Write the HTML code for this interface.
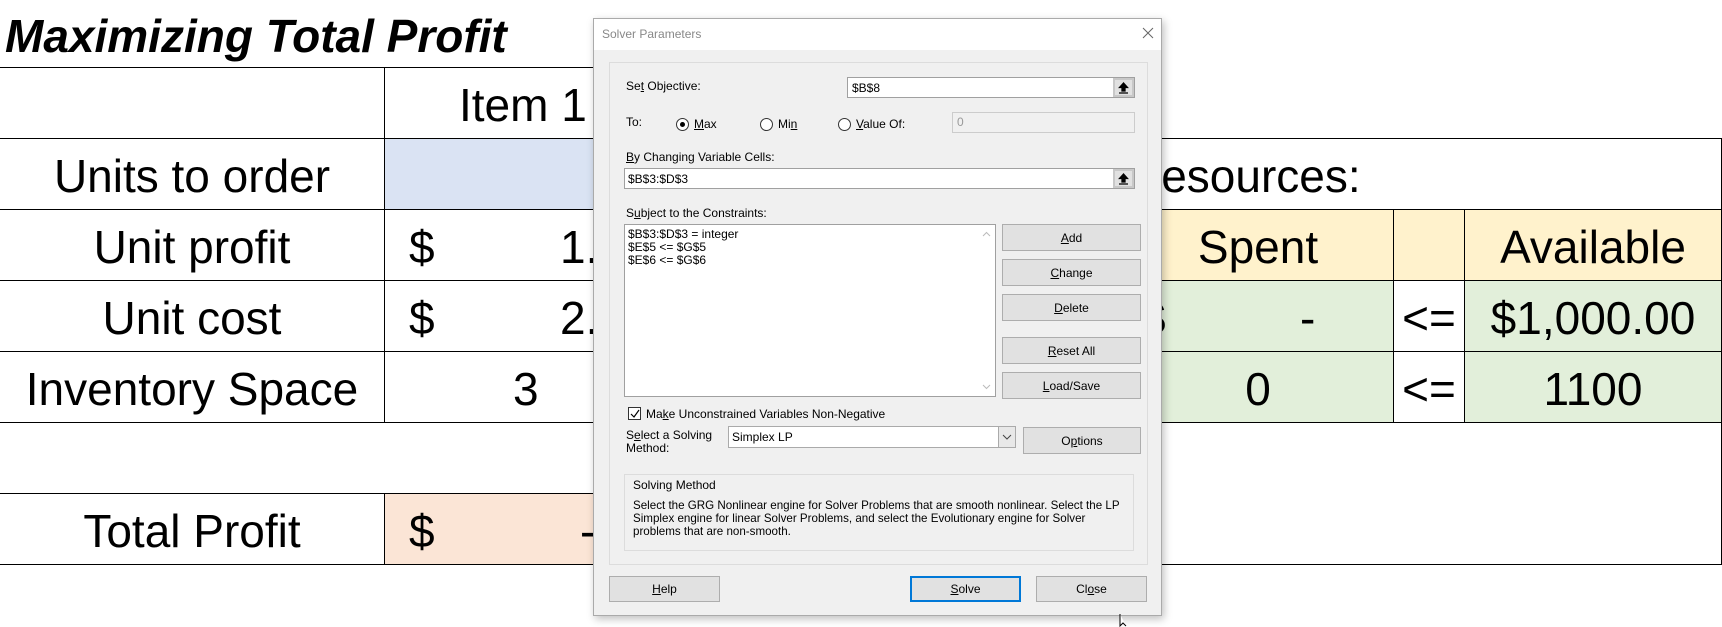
<!DOCTYPE html>
<html><head><meta charset="utf-8"><style>
*{margin:0;padding:0;box-sizing:border-box}
body{width:1722px;height:626px;background:#fff;position:relative;overflow:hidden;font-family:"Liberation Sans",sans-serif;color:#000}
.a{position:absolute}
.hl{position:absolute;height:1px;background:#000}
.vl{position:absolute;width:1px;background:#000}
.c{position:absolute;display:flex;align-items:center;justify-content:center;font-size:46px;white-space:nowrap;padding-top:4px}
.d{font-size:12px;font-family:"Liberation Sans",sans-serif;color:#000;position:absolute;white-space:nowrap}
.btn{position:absolute;background:#e1e1e1;border:1px solid #adadad;font-size:12px;display:flex;align-items:center;justify-content:center}
.inp{position:absolute;background:#fff;border:1px solid #a0a0a0}
.ref{position:absolute;right:0;top:0;bottom:0;width:21px;background:#e1e1e1;border:2px solid #c8c8c8;display:flex;align-items:center;justify-content:center}
.rad{position:absolute;width:13px;height:13px;border:1px solid #333;border-radius:50%;background:#fff}
u{text-decoration:underline}
</style></head><body>
<div class="a" style="left:5px;top:8px;font-size:46px;font-weight:bold;font-style:italic;line-height:56px">Maximizing Total Profit</div>

<div class="a" style="left:385px;top:139px;width:220px;height:70px;background:#dae3f3"></div>
<div class="a" style="left:385px;top:494px;width:220px;height:70px;background:#fbe5d6"></div>
<div class="a" style="left:1100px;top:210px;width:622px;height:70px;background:#fff2cc"></div>
<div class="a" style="left:1100px;top:281px;width:293px;height:141px;background:#e2efda"></div>
<div class="a" style="left:1465px;top:281px;width:257px;height:141px;background:#e2efda"></div>

<div class="hl" style="left:0;top:67px;width:620px"></div>
<div class="hl" style="left:0;top:138px;width:1722px"></div>
<div class="hl" style="left:0;top:209px;width:1722px"></div>
<div class="hl" style="left:0;top:280px;width:1722px"></div>
<div class="hl" style="left:0;top:351px;width:1722px"></div>
<div class="hl" style="left:0;top:422px;width:1722px"></div>
<div class="hl" style="left:0;top:493px;width:620px"></div>
<div class="hl" style="left:0;top:564px;width:1722px"></div>
<div class="vl" style="left:384px;top:67px;height:356px"></div>
<div class="vl" style="left:384px;top:493px;height:72px"></div>
<div class="vl" style="left:1393px;top:209px;height:214px"></div>
<div class="vl" style="left:1464px;top:209px;height:214px"></div>
<div class="vl" style="left:1721px;top:138px;height:427px"></div>

<div class="c" style="left:0;top:139px;width:384px;height:70px">Units to order</div>
<div class="c" style="left:0;top:210px;width:384px;height:70px">Unit profit</div>
<div class="c" style="left:0;top:281px;width:384px;height:70px">Unit cost</div>
<div class="c" style="left:0;top:352px;width:384px;height:70px">Inventory Space</div>
<div class="c" style="left:0;top:494px;width:384px;height:70px">Total Profit</div>
<div class="c" style="left:459px;top:68px;height:70px">Item 1</div>
<div class="c" style="left:409px;top:210px;height:70px">$</div>
<div class="c" style="left:409px;top:281px;height:70px">$</div>
<div class="c" style="left:409px;top:494px;height:70px">$</div>
<div class="c" style="left:560px;top:210px;height:70px">1.</div>
<div class="c" style="left:560px;top:281px;height:70px">2.</div>
<div class="c" style="left:513px;top:352px;height:70px">3</div>
<div class="c" style="left:580px;top:494px;height:70px">-</div>

<div class="c" style="left:1128px;top:139px;height:70px">Resources:</div>
<div class="c" style="left:1160px;top:210px;width:196px;height:70px">Spent</div>
<div class="c" style="left:1140px;top:281px;height:70px">$</div>
<div class="c" style="left:1300px;top:281px;height:70px">-</div>
<div class="c" style="left:1160px;top:352px;width:196px;height:70px">0</div>
<div class="c" style="left:1394px;top:281px;width:70px;height:70px">&lt;=</div>
<div class="c" style="left:1394px;top:352px;width:70px;height:70px">&lt;=</div>
<div class="c" style="left:1465px;top:210px;width:256px;height:70px">Available</div>
<div class="c" style="left:1465px;top:281px;width:256px;height:70px">$1,000.00</div>
<div class="c" style="left:1465px;top:352px;width:256px;height:70px">1100</div>

<div class="a" style="left:593px;top:18px;width:569px;height:598px;background:#f0f0f0;border:1px solid #aaa;box-shadow:2px 3px 8px rgba(0,0,0,0.25);z-index:5">
 <div class="a" style="left:0;top:0;width:567px;height:31px;background:#fff"></div>
 <div class="d" style="left:8px;top:8px;color:#888">Solver Parameters</div>
 <svg class="a" style="left:548px;top:8px" width="12" height="12"><path d="M1 1L11 11M11 1L1 11" stroke="#666" stroke-width="1"/></svg>
 <div class="a" style="left:15px;top:43px;width:539px;height:503px;border:1px solid #dcdcdc"></div>

 <div class="d" style="left:32px;top:60px">Se<u>t</u> Objective:</div>
 <div class="inp" style="left:253px;top:58px;width:288px;height:21px"><span class="d" style="left:4px;top:3px">$B$8</span><div class="ref"><svg width="11" height="12"><path d="M5.5 1L1.5 5.5H4V9H7V5.5H9.5Z M1 11H10" fill="#000" stroke="#000" stroke-width="1.3"/></svg></div></div>

 <div class="d" style="left:32px;top:96px">To:</div>
 <div class="rad" style="left:82px;top:99px"><div class="a" style="left:3px;top:3px;width:5px;height:5px;border-radius:50%;background:#000"></div></div>
 <div class="d" style="left:100px;top:98px"><u>M</u>ax</div>
 <div class="rad" style="left:166px;top:99px"></div>
 <div class="d" style="left:184px;top:98px">Mi<u>n</u></div>
 <div class="rad" style="left:244px;top:99px"></div>
 <div class="d" style="left:262px;top:98px"><u>V</u>alue Of:</div>
 <div class="inp" style="left:358px;top:93px;width:183px;height:21px;background:#f0f0f0;border-color:#ccc"><span class="d" style="left:4px;top:2px;color:#999">0</span></div>

 <div class="d" style="left:32px;top:131px"><u>B</u>y Changing Variable Cells:</div>
 <div class="inp" style="left:30px;top:149px;width:511px;height:21px"><span class="d" style="left:3px;top:3px">$B$3:$D$3</span><div class="ref"><svg width="11" height="12"><path d="M5.5 1L1.5 5.5H4V9H7V5.5H9.5Z M1 11H10" fill="#000" stroke="#000" stroke-width="1.3"/></svg></div></div>

 <div class="d" style="left:32px;top:187px">S<u>u</u>bject to the Constraints:</div>
 <div class="inp" style="left:30px;top:205px;width:372px;height:173px">
  <div class="d" style="left:3px;top:3px;line-height:13px">$B$3:$D$3 = integer<br>$E$5 &lt;= $G$5<br>$E$6 &lt;= $G$6</div>
  <svg class="a" style="right:4px;top:6px" width="9" height="6"><path d="M1 5L4.5 1.5L8 5" fill="none" stroke="#bbb"/></svg>
  <svg class="a" style="right:4px;bottom:6px" width="9" height="6"><path d="M1 1L4.5 4.5L8 1" fill="none" stroke="#bbb"/></svg>
 </div>
 <div class="btn" style="left:408px;top:205px;width:139px;height:27px"><span><u>A</u>dd</span></div>
 <div class="btn" style="left:408px;top:240px;width:139px;height:27px"><span><u>C</u>hange</span></div>
 <div class="btn" style="left:408px;top:275px;width:139px;height:27px"><span><u>D</u>elete</span></div>
 <div class="btn" style="left:408px;top:318px;width:139px;height:27px"><span><u>R</u>eset All</span></div>
 <div class="btn" style="left:408px;top:353px;width:139px;height:27px"><span><u>L</u>oad/Save</span></div>

 <div class="a" style="left:34px;top:388px;width:13px;height:13px;border:1px solid #333;background:#fff"><svg class="a" style="left:1px;top:1px" width="10" height="10"><path d="M1 5L4 8L9 1" fill="none" stroke="#000" stroke-width="1.2"/></svg></div>
 <div class="d" style="left:52px;top:388px">Ma<u>k</u>e Unconstrained Variables Non-Negative</div>

 <div class="d" style="left:32px;top:410px;line-height:13px">S<u>e</u>lect a Solving<br>Method:</div>
 <div class="inp" style="left:134px;top:407px;width:288px;height:22px;border-color:#aaa"><span class="d" style="left:3px;top:3px">Simplex LP</span>
  <div class="a" style="right:0;top:0;bottom:0;width:17px;background:#e8e8e8;border-left:1px solid #aaa"><svg class="a" style="left:3px;top:7px" width="10" height="6"><path d="M1 1L5 5L9 1" fill="none" stroke="#444"/></svg></div></div>
 <div class="btn" style="left:429px;top:408px;width:118px;height:27px"><span>O<u>p</u>tions</span></div>

 <div class="a" style="left:30px;top:455px;width:510px;height:77px;border:1px solid #dcdcdc"></div>
 <div class="d" style="left:39px;top:459px">Solving Method</div>
 <div class="d" style="left:39px;top:480px;line-height:13px;font-size:11.6px">Select the GRG Nonlinear engine for Solver Problems that are smooth nonlinear. Select the LP<br>Simplex engine for linear Solver Problems, and select the Evolutionary engine for Solver<br>problems that are non-smooth.</div>

 <div class="btn" style="left:15px;top:557px;width:111px;height:26px"><span><u>H</u>elp</span></div>
 <div class="btn" style="left:316px;top:557px;width:111px;height:26px;border:2px solid #0078d7"><span><u>S</u>olve</span></div>
 <div class="btn" style="left:442px;top:557px;width:111px;height:26px"><span>Cl<u>o</u>se</span></div>
</div>
<svg class="a" style="left:1119px;top:613px;z-index:6" width="14" height="14"><path d="M1 1 L1 13 L4 10 L7 13" fill="#fff" stroke="#000" stroke-width="1"/></svg>
</body></html>
